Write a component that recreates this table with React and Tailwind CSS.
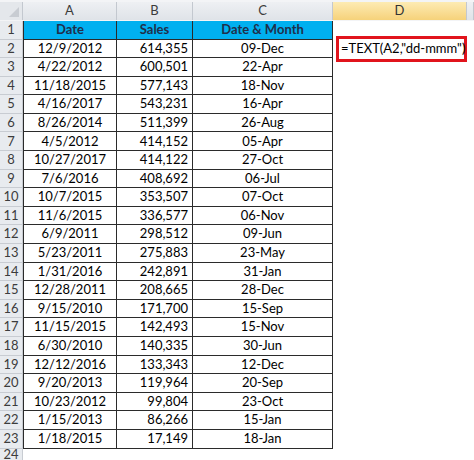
const rows = [
  ["12/9/2012", "614,355", "09-Dec"],
  ["4/22/2012", "600,501", "22-Apr"],
  ["11/18/2015", "577,143", "18-Nov"],
  ["4/16/2017", "543,231", "16-Apr"],
  ["8/26/2014", "511,399", "26-Aug"],
  ["4/5/2012", "414,152", "05-Apr"],
  ["10/27/2017", "414,122", "27-Oct"],
  ["7/6/2016", "408,692", "06-Jul"],
  ["10/7/2015", "353,507", "07-Oct"],
  ["11/6/2015", "336,577", "06-Nov"],
  ["6/9/2011", "298,512", "09-Jun"],
  ["5/23/2011", "275,883", "23-May"],
  ["1/31/2016", "242,891", "31-Jan"],
  ["12/28/2011", "208,665", "28-Dec"],
  ["9/15/2010", "171,700", "15-Sep"],
  ["11/15/2015", "142,493", "15-Nov"],
  ["6/30/2010", "140,335", "30-Jun"],
  ["12/12/2016", "133,343", "12-Dec"],
  ["9/20/2013", "119,964", "20-Sep"],
  ["10/23/2012", "99,804", "23-Oct"],
  ["1/15/2013", "86,266", "15-Jan"],
  ["1/18/2015", "17,149", "18-Jan"],
];

function ColHead({ label, w, active }) {
  return (
    <div
      className={`${w} h-full flex items-center justify-center border-r border-[#c3c8cf] ${
        active
          ? "bg-gradient-to-b from-[#fdebb3] to-[#f6d27a] text-[#333]"
          : "bg-gradient-to-b from-[#eef0f3] to-[#dfe3e8] text-[#3c3c3c]"
      }`}
    >
      {label}
    </div>
  );
}

function RowNum({ n }) {
  return (
    <div className="w-[23px] shrink-0 h-full flex items-center justify-center bg-[#e8ebef] border-r border-b border-[#c8ccd2] text-[#3c3c3c]">
      {n}
    </div>
  );
}

export default function App() {
  return (
    <div
      className="w-[474px] h-[460px] overflow-hidden bg-white text-[13px] text-black relative"
      style={{ fontFamily: "Lato, 'Open Sans', sans-serif" }}
    >
      {/* column headers */}
      <div className="flex h-[21px] border-t-2 border-[#f3f4f6] border-b border-[#b9bec6]">
        <div className="w-[23px] shrink-0 h-full bg-[#e4e7eb] border-r border-[#c3c8cf] relative">
          <div className="absolute right-[3px] bottom-[3px] w-0 h-0 border-l-[10px] border-l-transparent border-b-[10px] border-b-[#c8ccd2]" />
        </div>
        <ColHead label="A" w="w-[94px] shrink-0" />
        <ColHead label="B" w="w-[76px] shrink-0" />
        <ColHead label="C" w="w-[140px] shrink-0" />
        <ColHead label="D" w="w-[134px] shrink-0" active />
        <ColHead label="" w="flex-1" />
      </div>

      {/* row 1 */}
      <div className="flex h-[18.5px]">
        <RowNum n={1} />
        <div className="w-[94px] shrink-0 flex items-center justify-center bg-[#00b0f0] border-l border-r border-b border-[#2b2b2b] font-bold text-[#1f2f4a]">
          Date
        </div>
        <div className="w-[76px] shrink-0 flex items-center justify-center bg-[#00b0f0] border-r border-b border-[#2b2b2b] font-bold text-[#1f2f4a]">
          Sales
        </div>
        <div className="w-[140px] shrink-0 flex items-center justify-center bg-[#00b0f0] border-r border-b border-[#2b2b2b] font-bold text-[#1f2f4a]">
          Date &amp; Month
        </div>
        <div className="flex-1" />
      </div>

      {rows.map((r, i) => (
        <div key={i} className="flex h-[18.6px]">
          <RowNum n={i + 2} />
          <div className="w-[94px] shrink-0 flex items-center justify-center border-l border-r border-b border-[#2b2b2b]">
            {r[0]}
          </div>
          <div className="w-[76px] shrink-0 flex items-center justify-end pr-[4px] border-r border-b border-[#2b2b2b]">
            {r[1]}
          </div>
          <div className="w-[140px] shrink-0 flex items-center justify-center border-r border-b border-[#2b2b2b]">
            {r[2]}
          </div>
          <div className="flex-1" />
        </div>
      ))}

      <div className="flex h-[12px]">
        <div className="w-[23px] shrink-0 h-full bg-[#e8ebef] border-r border-[#c8ccd2] text-[#3c3c3c] flex justify-center leading-[11px]">
          24
        </div>
      </div>

      {/* annotation over D2 */}
      <div className="absolute left-[336px] top-[36px] w-[131px] h-[26px] border-[3px] border-[#e1141c] flex items-center pl-[2px] whitespace-nowrap">
        =TEXT(A2,"dd-mmm")
      </div>
    </div>
  );
}
